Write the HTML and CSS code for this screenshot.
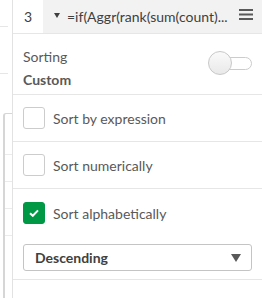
FILE: index.html
```html
<!DOCTYPE html>
<html lang="en">
<head>
    <meta charset="UTF-8">
    <meta name="viewport" content="width=device-width, initial-scale=1.0">
    <title>Sorting</title>
    <link rel="stylesheet" href="styles.css">
</head>
<body>
    <div class="layout">
        <div class="side">
            <div class="side-line first"></div>
            <div class="side-line"></div>
            <div class="side-box">
                <div class="tick"></div>
                <div class="tick"></div>
                <div class="tick"></div>
                <div class="tick"></div>
            </div>
        </div>

        <div class="panel">
            <div class="header">
                <div class="tab">3</div>
                <div class="expr">
                    <span class="caret"></span>
                    <span class="expr-text">=if(Aggr(rank(sum(count)...</span>
                    <span class="menu">
                        <svg width="14" height="11" viewBox="0 0 14 11">
                            <rect x="0" y="0" width="14" height="2" fill="#595959"/>
                            <rect x="0" y="4.5" width="14" height="2" fill="#595959"/>
                            <rect x="0" y="9" width="14" height="2" fill="#595959"/>
                        </svg>
                    </span>
                </div>
            </div>

            <div class="section sorting">
                <div class="sort-labels">
                    <div class="label">Sorting</div>
                    <div class="value">Custom</div>
                </div>
                <div class="switch">
                    <div class="track"></div>
                    <div class="knob"></div>
                </div>
            </div>

            <div class="section row">
                <span class="check"></span>
                <span class="row-text">Sort by expression</span>
            </div>

            <div class="section row">
                <span class="check"></span>
                <span class="row-text">Sort numerically</span>
            </div>

            <div class="section alpha">
                <div class="alpha-head">
                    <span class="check on">
                        <svg width="10" height="8" viewBox="0 0 10 8">
                            <path d="M1 4.2 L3.8 6.8 L9 1.4" fill="none" stroke="#fff" stroke-width="2"/>
                        </svg>
                    </span>
                    <span class="row-text">Sort alphabetically</span>
                </div>
                <div class="select">
                    <span>Descending</span>
                    <span class="select-caret"></span>
                </div>
            </div>
        </div>
    </div>
</body>
</html>
```

FILE: styles.css
```css
html, body {
    margin: 0;
    padding: 0;
}
body {
    font-family: Lato, "Liberation Sans", sans-serif;
    background: #fff;
    color: #595959;
    width: 262px;
    height: 298px;
    overflow: hidden;
}
.layout {
    display: flex;
    height: 298px;
}
.side {
    width: 12px;
    border-right: 1px solid #e2e2e2;
    background: #fff;
    overflow: hidden;
}
.side-line {
    height: 1px;
    width: 8px;
    background: #e6e6e6;
    margin-top: 46px;
}
.side-line.first {
    margin-top: 26px;
}
.side-box {
    margin-top: 39px;
    margin-left: 3px;
    height: 185px;
    box-sizing: border-box;
    border-left: 2px solid #d6d6d6;
    border-top: 1px solid #d6d6d6;
    border-top-left-radius: 3px;
    padding-top: 40px;
}
.tick {
    height: 1px;
    width: 7px;
    background: #ebebeb;
    margin-bottom: 26px;
}
.panel {
    flex: 1;
    display: flex;
    flex-direction: column;
}
.header {
    display: flex;
    height: 33px;
    border-bottom: 1px solid #e6e6e6;
}
.tab {
    width: 30px;
    background: #fff;
    font-size: 14px;
    color: #404040;
    padding-left: 11px;
    box-sizing: border-box;
    line-height: 33px;
}
.expr {
    flex: 1;
    background: #f2f2f2;
    display: flex;
    align-items: center;
    padding-left: 11px;
    padding-right: 9px;
}
.caret {
    width: 0;
    height: 0;
    border-left: 3.5px solid transparent;
    border-right: 3.5px solid transparent;
    border-top: 5px solid #404040;
    margin-right: 7px;
    margin-top: -3px;
}
.expr-text {
    flex: 1;
    font-size: 14px;
    color: #404040;
    white-space: nowrap;
    overflow: hidden;
    margin-top: -1px;
}
.menu {
    display: flex;
    margin-top: -4px;
}
.section {
    border-bottom: 1px solid #e6e6e6;
    padding-left: 10px;
    padding-right: 10px;
}
.sorting {
    height: 60px;
    display: flex;
    align-items: center;
    justify-content: space-between;
}
.sort-labels {
    margin-top: 8px;
}
.label {
    font-size: 14px;
    line-height: 23px;
}
.value {
    font-size: 14px;
    font-weight: 700;
    line-height: 23px;
    color: #595959;
}
.switch {
    position: relative;
    width: 44px;
    height: 24px;
    margin-top: -2px;
}
.track {
    position: absolute;
    left: 7px;
    right: 0;
    top: 6px;
    height: 11px;
    border: 1px solid #cccccc;
    border-radius: 7px;
    background: #fff;
}
.knob {
    position: absolute;
    left: 0;
    top: 0;
    width: 22px;
    height: 22px;
    border: 1px solid #c8c8c8;
    border-radius: 50%;
    background: linear-gradient(#fafafa, #e9e9e9);
}
.row {
    height: 46px;
    display: flex;
    align-items: center;
}
.check {
    width: 20px;
    height: 20px;
    border: 1px solid #cccccc;
    border-radius: 3px;
    background: #fff;
    margin-right: 8px;
    display: flex;
    align-items: center;
    justify-content: center;
    flex-shrink: 0;
}
.check.on {
    background: #009845;
    border-color: #009845;
}
.row-text {
    font-size: 14px;
    color: #595959;
}
.alpha {
    height: 91px;
    padding-top: 13px;
    box-sizing: border-box;
}
.alpha-head {
    display: flex;
    align-items: center;
}
.select {
    margin-top: 20px;
    height: 25px;
    border: 1px solid #c4c4c4;
    border-radius: 3px;
    display: flex;
    align-items: center;
    justify-content: space-between;
    padding-left: 11px;
    padding-right: 10px;
    font-size: 14px;
    font-weight: 700;
    color: #404040;
}
.select-caret {
    width: 0;
    height: 0;
    border-left: 5px solid transparent;
    border-right: 5px solid transparent;
    border-top: 8px solid #595959;
}
```
